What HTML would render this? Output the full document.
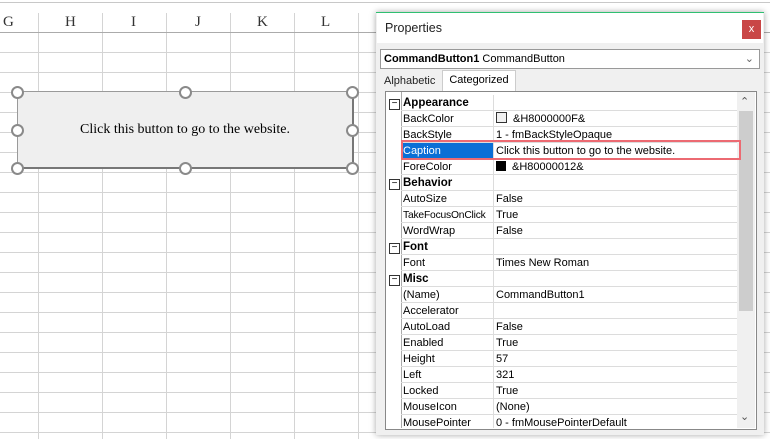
<!DOCTYPE html><html><head><style>
body{margin:0;width:770px;height:439px;overflow:hidden;background:#fff;font-family:"Liberation Sans",sans-serif;position:relative}
.a{position:absolute}
.hl{position:absolute;left:0;width:770px;height:1px;background:#d4d4d4}
.vl{position:absolute;top:13px;width:1px;height:426px;background:#d4d4d4}
.ch{position:absolute;top:14px;font:15px "Liberation Serif",serif;color:#333}
.h{position:absolute;width:9px;height:9px;border:2px solid #8a8a8a;border-radius:50%;background:#fff}
.row{position:absolute;left:401px;width:336px;height:16px;border-bottom:1px solid #dcdcdc;box-sizing:border-box;font-size:11px;line-height:15px;padding-top:1px}
.row .n{position:absolute;left:2px;top:1px}
.row .v{position:absolute;left:92px;top:0;width:244px;height:15px;border-left:1px solid #dcdcdc;padding-left:2px;padding-top:1px;white-space:nowrap}
.cat{font-weight:bold;font-size:11.5px}
.bx{position:absolute;left:389px;width:9px;height:9px;border:1px solid #333;font-size:10px;line-height:8px;text-align:center;background:#fff}
</style></head><body>
<div class="a" style="left:0;top:2px;width:770px;height:1px;background:#c8c8c8"></div>
<div class="ch" style="left:3px">G</div><div class="ch" style="left:65px">H</div><div class="ch" style="left:131px">I</div><div class="ch" style="left:195px">J</div><div class="ch" style="left:257px">K</div><div class="ch" style="left:321px">L</div>
<div class="vl" style="left:38px"></div><div class="vl" style="left:102px"></div><div class="vl" style="left:166px"></div><div class="vl" style="left:230px"></div><div class="vl" style="left:294px"></div><div class="vl" style="left:358px"></div>
<div class="hl" style="top:32px;background:#ababab"></div>
<div class="hl" style="top:52px"></div><div class="hl" style="top:72px"></div><div class="hl" style="top:92px"></div><div class="hl" style="top:112px"></div><div class="hl" style="top:132px"></div><div class="hl" style="top:152px"></div><div class="hl" style="top:172px"></div><div class="hl" style="top:192px"></div><div class="hl" style="top:212px"></div><div class="hl" style="top:232px"></div><div class="hl" style="top:252px"></div><div class="hl" style="top:272px"></div><div class="hl" style="top:292px"></div><div class="hl" style="top:312px"></div><div class="hl" style="top:332px"></div><div class="hl" style="top:352px"></div><div class="hl" style="top:372px"></div><div class="hl" style="top:392px"></div><div class="hl" style="top:412px"></div><div class="hl" style="top:432px"></div>
<div class="a" style="left:17px;top:91px;width:334px;height:75px;background:#efefef;border:1px solid #9a9a9a;border-right:2px solid #777;border-bottom:2px solid #777;font:14px 'Liberation Serif',serif;text-align:center;line-height:75px">Click this button to go to the website.</div>
<div class="h" style="left:11px;top:86px"></div><div class="h" style="left:179px;top:86px"></div><div class="h" style="left:346px;top:86px"></div>
<div class="h" style="left:11px;top:124px"></div><div class="h" style="left:346px;top:124px"></div>
<div class="h" style="left:11px;top:162px"></div><div class="h" style="left:179px;top:162px"></div><div class="h" style="left:346px;top:162px"></div>
<div class="a" style="left:376px;top:12px;width:388px;height:422px;background:#f0f0f0;border-top:1px solid #2fbf71;box-shadow:0 0 6px rgba(0,0,0,.35)"></div>
<div class="a" style="left:377px;top:13px;width:386px;height:30px;background:#fff"></div>
<div class="a" style="left:385px;top:21px;font-size:12.5px;color:#222">Properties</div>
<div class="a" style="left:742px;top:20px;width:19px;height:19px;background:#c94646;color:#fff;font-size:11px;text-align:center;line-height:18px">x</div>
<div class="a" style="left:380px;top:49px;width:378px;height:18px;background:#fff;border:1px solid #999;font-size:11px;line-height:18px"><b style="margin-left:3px">CommandButton1</b> CommandButton<span style="position:absolute;right:5px;color:#666">&#8964;</span></div>
<div class="a" style="left:384px;top:75px;font-size:11px;color:#222">Alphabetic</div>
<div class="a" style="left:442px;top:70px;width:72px;height:20px;background:#fff;border:1px solid #ccc;border-bottom:none;font-size:11px;line-height:19px;text-align:center">Categorized</div>
<div class="a" style="left:385px;top:91px;width:370px;height:337px;background:#fff;border:1px solid #888;overflow:hidden"></div>
<div class="a" style="left:386px;top:92px;width:370px;height:336px;overflow:hidden">
<div style="position:absolute;left:351px;top:0;width:18px;height:336px;background:#f0f0f0"></div>
<div style="position:absolute;left:353px;top:19px;width:14px;height:200px;background:#cdcdcd"></div>
<div style="position:absolute;left:354px;top:3px;font-size:11px;color:#555">&#8963;</div>
<div style="position:absolute;left:354px;top:318px;font-size:11px;color:#555">&#8964;</div>
<div style="position:absolute;left:15px;top:0;width:1px;height:336px;background:#aaa"></div>
</div>
<div class="a" style="left:386px;top:92px;width:351px;height:336px;overflow:hidden">
<div style="position:relative;left:-386px;top:-92px">
<div class="bx" style="top:99px">−</div><div class="row" style="top:95px"><span class="n cat">Appearance</span><span class="v"></span></div>
<div class="row" style="top:111px"><span class="n">BackColor</span><span class="v"><span style="display:inline-block;width:9px;height:9px;border:1px solid #333;background:#f0f0f0;vertical-align:-1px;margin-right:6px"></span>&amp;H8000000F&amp;</span></div>
<div class="row" style="top:127px"><span class="n">BackStyle</span><span class="v">1 - fmBackStyleOpaque</span></div>
<div class="row" style="top:143px"><span class="n" style="left:0;top:0;width:90px;background:#0a6fd6;color:#fff;padding-left:2px;padding-top:1px;height:15px">Caption</span><span class="v">Click this button to go to the website.</span></div>
<div class="row" style="top:159px"><span class="n">ForeColor</span><span class="v"><span style="display:inline-block;width:10px;height:10px;background:#000;vertical-align:-1px;margin-right:6px"></span>&amp;H80000012&amp;</span></div>
<div class="bx" style="top:179px">−</div><div class="row" style="top:175px"><span class="n cat">Behavior</span><span class="v"></span></div>
<div class="row" style="top:191px"><span class="n">AutoSize</span><span class="v">False</span></div>
<div class="row" style="top:207px"><span class="n" style="font-size:10.3px;letter-spacing:-0.2px">TakeFocusOnClick</span><span class="v">True</span></div>
<div class="row" style="top:223px"><span class="n">WordWrap</span><span class="v">False</span></div>
<div class="bx" style="top:243px">−</div><div class="row" style="top:239px"><span class="n cat">Font</span><span class="v"></span></div>
<div class="row" style="top:255px"><span class="n">Font</span><span class="v">Times New Roman</span></div>
<div class="bx" style="top:275px">−</div><div class="row" style="top:271px"><span class="n cat">Misc</span><span class="v"></span></div>
<div class="row" style="top:287px"><span class="n">(Name)</span><span class="v">CommandButton1</span></div>
<div class="row" style="top:303px"><span class="n">Accelerator</span><span class="v"></span></div>
<div class="row" style="top:319px"><span class="n">AutoLoad</span><span class="v">False</span></div>
<div class="row" style="top:335px"><span class="n">Enabled</span><span class="v">True</span></div>
<div class="row" style="top:351px"><span class="n">Height</span><span class="v">57</span></div>
<div class="row" style="top:367px"><span class="n">Left</span><span class="v">321</span></div>
<div class="row" style="top:383px"><span class="n">Locked</span><span class="v">True</span></div>
<div class="row" style="top:399px"><span class="n">MouseIcon</span><span class="v">(None)</span></div>
<div class="row" style="top:415px"><span class="n">MousePointer</span><span class="v">0 - fmMousePointerDefault</span></div>
</div></div>
<div class="a" style="left:401px;top:140px;width:336px;height:16px;border:2px solid #ec6a72;box-sizing:content-box"></div>
</body></html>
